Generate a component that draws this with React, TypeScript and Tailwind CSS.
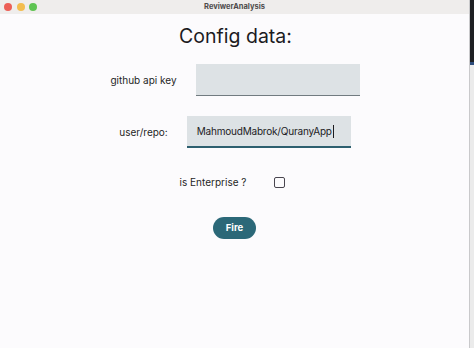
import React from "react";

export default function App() {
  return (
    <div className="w-[474px] h-[348px] flex overflow-hidden bg-[#fcfbfd]" style={{ fontFamily: "Inter, 'Noto Sans', sans-serif" }}>
      <div className="w-[470px] h-full flex flex-col border-r border-[#c9c9cb]">
        <div className="h-[14px] bg-[#efedec] flex items-center relative shrink-0">
          <div className="flex items-center gap-[4.5px] pl-[4px]">
            <span className="w-[8px] h-[8px] rounded-full bg-[#ec5f57]" />
            <span className="w-[8px] h-[8px] rounded-full bg-[#f3bd4f]" />
            <span className="w-[8px] h-[8px] rounded-full bg-[#5fc453]" />
          </div>
          <div className="absolute inset-0 flex items-center justify-center text-[7.5px] font-bold text-[#4d4b4b] leading-none">
            ReviwerAnalysis
          </div>
        </div>
        <div className="flex-1 flex flex-col items-center pt-[9px] text-[#1f1f1f]">
          <div className="text-[19.5px] leading-[26px] text-[#1c1b1f] pl-[2px]">Config data:</div>
          <div className="mt-[15px] flex items-center gap-[19px] pl-[1px]">
            <span className="text-[10px]">github api key</span>
            <div className="w-[164px] h-[32px] bg-[#dde2e5] border-b-[1.5px] border-[#717b80]" />
          </div>
          <div className="mt-[20px] flex items-center gap-[19px] pl-[1px]">
            <span className="text-[10px]">user/repo:</span>
            <div className="w-[164px] h-[32px] bg-[#dde2e5] border-b-2 border-[#2d5f6f] flex items-center pl-[10px]">
              <span className="text-[10px] tracking-[-0.2px] text-[#1c1b1f]">MahmoudMabrok/QuranyApp</span>
              <span className="w-px h-[13px] bg-[#1c1b1f] ml-[1px]" />
            </div>
          </div>
          <div className="mt-[24px] h-[20px] flex items-center gap-[28px] pr-[4px]">
            <span className="text-[10px]">is Enterprise ?</span>
            <span className="w-[11px] h-[11px] border-[1.5px] border-[#49454f] rounded-[2px]" />
          </div>
          <button className="mt-[25px] w-[43px] h-[22px] rounded-full bg-[#2b6878] text-white text-[9.5px] font-bold flex items-center justify-center">
            Fire
          </button>
        </div>
      </div>
      <div className="flex-1 flex flex-col">
        <div className="h-[62px] bg-[#1e1f22]" />
        <div className="h-[3px] bg-[#2f4d7c]" />
        <div className="flex-1 bg-[#ebebeb]" />
      </div>
    </div>
  );
}
